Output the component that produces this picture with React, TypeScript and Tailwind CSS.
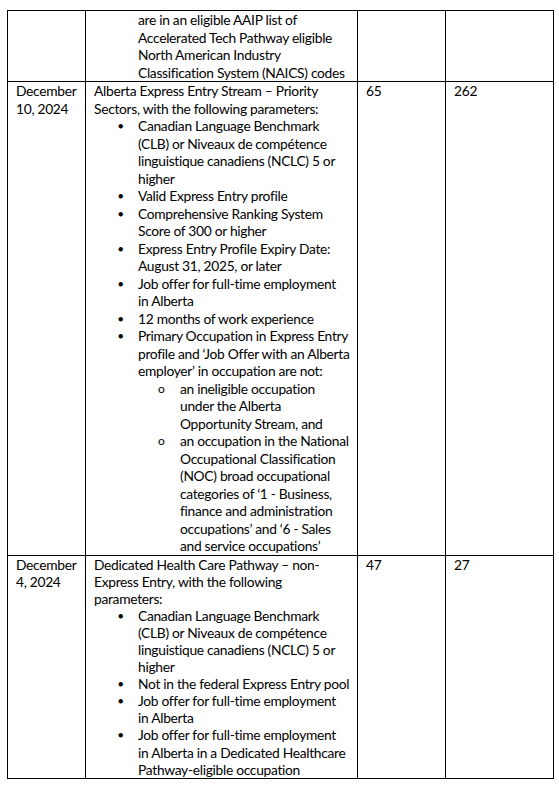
import React from "react"

type Bullet = { lines: string[]; sub?: string[][] }

const tdBase = "border border-black align-top p-0 pl-2"

function Lines({ lines }: { lines: string[] }) {
  return (
    <>
      {lines.map((l, i) => (
        <div key={i} className="whitespace-nowrap">
          {l}
        </div>
      ))}
    </>
  )
}

function BulletList({ items }: { items: Bullet[] }) {
  return (
    <div>
      {items.map((b, i) => (
        <div key={i}>
          <div className="flex">
            <div className="w-[44px] shrink-0 pl-[24px] text-[9px]">●</div>
            <div>
              <Lines lines={b.lines} />
            </div>
          </div>
          {b.sub?.map((s, j) => (
            <div key={j} className="flex">
              <div className="w-[86px] shrink-0 pl-[64px] text-[12px]">o</div>
              <div>
                <Lines lines={s} />
              </div>
            </div>
          ))}
        </div>
      ))}
    </div>
  )
}

const albertaItems: Bullet[] = [
  {
    lines: [
      "Canadian Language Benchmark",
      "(CLB) or Niveaux de compétence",
      "linguistique canadiens (NCLC) 5 or",
      "higher",
    ],
  },
  { lines: ["Valid Express Entry profile"] },
  { lines: ["Comprehensive Ranking System", "Score of 300 or higher"] },
  { lines: ["Express Entry Profile Expiry Date:", "August 31, 2025, or later"] },
  { lines: ["Job offer for full-time employment", "in Alberta"] },
  { lines: ["12 months of work experience"] },
  {
    lines: [
      "Primary Occupation in Express Entry",
      "profile and ‘Job Offer with an Alberta",
      "employer’ in occupation are not:",
    ],
    sub: [
      ["an ineligible occupation", "under the Alberta", "Opportunity Stream, and"],
      [
        "an occupation in the National",
        "Occupational Classification",
        "(NOC) broad occupational",
        "categories of ‘1 - Business,",
        "finance and administration",
        "occupations’ and ‘6 - Sales",
        "and service occupations’",
      ],
    ],
  },
]

const healthItems: Bullet[] = [
  {
    lines: [
      "Canadian Language Benchmark",
      "(CLB) or Niveaux de compétence",
      "linguistique canadiens (NCLC) 5 or",
      "higher",
    ],
  },
  { lines: ["Not in the federal Express Entry pool"] },
  { lines: ["Job offer for full-time employment", "in Alberta"] },
  {
    lines: [
      "Job offer for full-time employment",
      "in Alberta in a Dedicated Healthcare",
      "Pathway-eligible occupation",
    ],
  },
]

export default function App() {
  return (
    <div
      className="min-h-screen bg-white text-black pt-[10px] pl-[7px] text-[13.8px] tracking-[-0.3px]"
      style={{ fontFamily: "Lato, 'Open Sans', sans-serif" }}
    >
      <table className="border-collapse table-fixed w-[546px]">
        <colgroup>
          <col className="w-[78px]" />
          <col className="w-[272px]" />
          <col className="w-[88px]" />
          <col className="w-[108px]" />
        </colgroup>
        <tbody className="leading-[17.5px]">
          <tr>
            <td className={tdBase}></td>
            <td className={tdBase}>
              <div className="pl-[44px]">
                <Lines
                  lines={[
                    "are in an eligible AAIP list of",
                    "Accelerated Tech Pathway eligible",
                    "North American Industry",
                    "Classification System (NAICS) codes",
                  ]}
                />
              </div>
            </td>
            <td className={tdBase}></td>
            <td className={tdBase}></td>
          </tr>
          <tr>
            <td className={tdBase}>
              <Lines lines={["December", "10, 2024"]} />
            </td>
            <td className={tdBase}>
              <Lines
                lines={[
                  "Alberta Express Entry Stream – Priority",
                  "Sectors, with the following parameters:",
                ]}
              />
              <BulletList items={albertaItems} />
            </td>
            <td className={tdBase}>65</td>
            <td className={tdBase}>262</td>
          </tr>
          <tr className="leading-[17.1px]">
            <td className={tdBase}>
              <Lines lines={["December", "4, 2024"]} />
            </td>
            <td className={tdBase}>
              <Lines
                lines={[
                  "Dedicated Health Care Pathway – non-",
                  "Express Entry, with the following",
                  "parameters:",
                ]}
              />
              <BulletList items={healthItems} />
            </td>
            <td className={tdBase}>47</td>
            <td className={tdBase}>27</td>
          </tr>
        </tbody>
      </table>
    </div>
  )
}
